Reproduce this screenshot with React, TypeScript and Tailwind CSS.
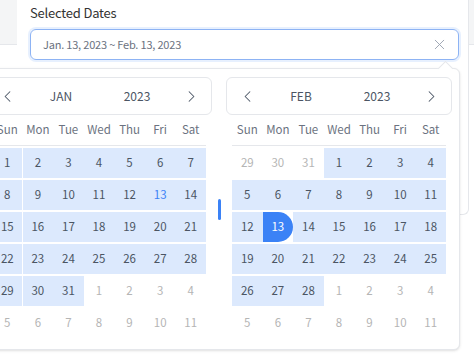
import { ChevronLeft, ChevronRight, X } from 'lucide-react'

const WEEK = ['Sun', 'Mon', 'Tue', 'Wed', 'Thu', 'Fri', 'Sat']

interface Day {
  n: number
  inMonth: boolean
}

// builds 6 rows x 7 days starting at a given leading offset
function buildDays(lead: number, prevLast: number, total: number): Day[] {
  const days: Day[] = []
  for (let i = lead - 1; i >= 0; i--) days.push({ n: prevLast - i, inMonth: false })
  for (let d = 1; d <= total; d++) days.push({ n: d, inMonth: true })
  let next = 1
  while (days.length < 42) days.push({ n: next++, inMonth: false })
  return days
}

interface CalendarProps {
  month: string
  year: number
  days: Day[]
  accentDay?: number
  selectedDay?: number
  splitFirstCol?: boolean
}

function Calendar({ month, year, days, accentDay, selectedDay, splitFirstCol }: CalendarProps) {
  return (
    <div className="w-[226px] shrink-0">
      <div className="h-[38px] flex items-center border border-gray-200 rounded-md text-[12px] text-[#4b5563]">
        <button className="w-10 flex justify-center text-gray-600">
          <ChevronLeft size={19} strokeWidth={1.3} />
        </button>
        <span className="flex-1 text-center pr-[4px]">{month}</span>
        <span className="flex-1 text-center pl-[4px]">{year}</span>
        <button className="w-10 flex justify-center text-gray-600">
          <ChevronRight size={19} strokeWidth={1.3} />
        </button>
      </div>

      <div className="px-[6px]">
        <div className="grid grid-cols-7 h-[31px] items-center border-b border-gray-200 text-[11.5px] text-[#6b7280]">
          {WEEK.map((w) => (
            <span key={w} className="text-center">
              {w}
            </span>
          ))}
        </div>

        <div className="grid grid-cols-7 gap-y-[2px] mt-[2px] text-[11.5px]">
          {days.map((d, i) => {
            const isSelected = d.inMonth && d.n === selectedDay
            const isAccent = d.inMonth && d.n === accentDay
            if (isSelected) {
              return (
                <div key={i} className="h-[30px] bg-white">
                  <div className="h-full w-full rounded-r-full bg-[#3b82f6] text-white flex items-center justify-center">
                    {d.n}
                  </div>
                </div>
              )
            }
            return (
              <div
                key={i}
                className={
                  'h-[30px] flex items-center justify-center ' +
                  (d.inMonth ? 'bg-[#dce9fd] ' : 'bg-white text-[#b5b5b5] ') +
                  (d.inMonth && !isAccent ? 'text-[#4b5563] ' : '') +
                  (isAccent ? 'text-[#3b82f6] ' : '') +
                  (splitFirstCol && i % 7 === 0 ? 'shadow-[inset_-1px_0_0_white]' : '')
                }
              >
                {d.n}
              </div>
            )
          })}
        </div>
      </div>
    </div>
  )
}

export default function App() {
  const jan = buildDays(0, 31, 31)
  const feb = buildDays(3, 31, 28)

  return (
    <div
      className="relative w-[474px] h-[357px] overflow-hidden bg-white"
      style={{ fontFamily: '"Noto Sans CJK KR", "Noto Sans", sans-serif' }}
    >
      <div className="flex items-start">
        <div className="w-[17px] h-[45px] bg-[#f4f5f6] border-b border-gray-200" />
        <div className="w-[452px] h-[215px] bg-white border-r border-b border-gray-200 rounded-br-md pl-[13px] pt-[3px]">
          <div className="h-[20px] leading-[20px] text-[13px] tracking-[-0.2px] text-[#333]">Selected Dates</div>
          <div className="mt-[6px] w-[429px] h-[31px] flex items-center rounded-md border border-[#8db3f4] shadow-[0_0_0_2px_rgba(59,130,246,0.12)] pl-[12px] pr-[10px]">
            <span className="flex-1 text-[11px] tracking-[-0.2px] text-[#6b7280]">Jan. 13, 2023 ~ Feb. 13, 2023</span>
            <X size={17} strokeWidth={1.3} className="text-gray-400" />
          </div>
        </div>
        <div className="flex-1 h-[45px] bg-[#f4f5f6] border-b border-gray-200" />
      </div>

      {/* popup */}
      <div className="absolute left-[-22px] top-[68px] w-[482px] h-[282px] bg-white border border-gray-200 rounded-md shadow-sm px-[7px] pt-[8px]">
        <div className="absolute top-[-6.5px] left-[461px] w-[11px] h-[11px] rotate-45 bg-white border-l border-t border-gray-200" />
        <div className="flex items-center">
          <Calendar month="JAN" year={2023} days={jan} accentDay={13} splitFirstCol />
          <div className="w-[14px] flex justify-center">
            <div className="w-[3px] h-[21px] mt-[4px] rounded-full bg-[#3b82f6]" />
          </div>
          <Calendar month="FEB" year={2023} days={feb} selectedDay={13} />
        </div>
      </div>
    </div>
  )
}
